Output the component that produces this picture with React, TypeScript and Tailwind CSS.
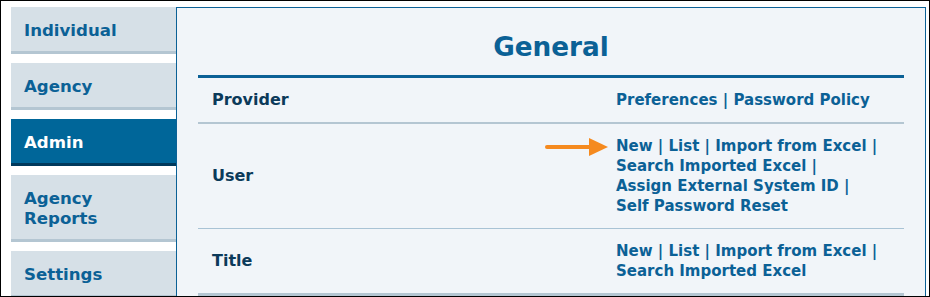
import React from "react"

const font = { fontFamily: '"DejaVu Sans", Verdana, sans-serif' }

const tabs = [
  { label: "Individual", h: "h-[47px]" },
  { label: "Agency", h: "h-[47px]" },
  { label: "Admin", h: "h-[47px]", active: true },
  { label: "Agency\nReports", h: "h-[67px]" },
  { label: "Settings", h: "h-[47px]" },
]

function Links({ items }: { items: string[][] }) {
  return (
    <div className="flex flex-col">
      {items.map((line, i) => (
        <div key={i} className="h-[20px] leading-[20px] whitespace-nowrap">
          {line.map((t, j) => (
            <span key={j}>
              <span>{t}</span>
              {j < line.length - 1 || (i < items.length - 1) ? <span> | </span> : null}
            </span>
          ))}
        </div>
      ))}
    </div>
  )
}

function Arrow() {
  return (
    <svg className="absolute left-[-71px] top-[1px]" width="64" height="20" viewBox="0 0 64 20">
      <line x1="2" y1="10" x2="46" y2="10" stroke="#f58a1f" strokeWidth="4" strokeLinecap="round" />
      <polygon points="44,1 63,10 44,19" fill="#f58a1f" />
    </svg>
  )
}

export default function App() {
  return (
    <div
      className="w-[930px] h-[297px] border border-black bg-white overflow-hidden flex pt-[6px] pl-[10px] pr-[3px] font-bold"
      style={font}
    >
      <div className="w-[165px] shrink-0 flex flex-col gap-[9px] text-[16.6px]">
        {tabs.map((t) => (
          <div
            key={t.label}
            className={
              t.active
                ? `${t.h} shrink-0 bg-[#006699] border-b-[3px] border-[#00395c] text-white flex items-center pl-[13px] pt-[3px] leading-[20px] whitespace-pre-line`
                : `${t.h} shrink-0 bg-[#d6e0e7] border-b-[3px] border-[#b4c6d2] text-[#0b6196] flex items-center pl-[13px] pt-[3px] leading-[20px] whitespace-pre-line`
            }
          >
            {t.label}
          </div>
        ))}
      </div>
      <div className="flex-1 bg-[#f1f5f9] border-l border-r border-t border-[#0b6196] px-[21px]">
        <div className="h-[67px] flex items-center justify-center text-[26.3px] text-[#0b6196] pt-[12px]">
          General
        </div>
        <div className="border-t-[3px] border-[#0b6196] text-[15px]">
          <div className="h-[46px] flex items-center border-b-2 border-[#b4c6d2]">
            <div className="w-[418px] pl-[14px] text-[#0b3a5a] text-[16px]">Provider</div>
            <div className="text-[#0b6196]">Preferences | Password Policy</div>
          </div>
          <div className="h-[105px] flex items-center border-b border-[#a9c3d5]">
            <div className="w-[418px] pl-[14px] text-[#0b3a5a] text-[16px]">User</div>
            <div className="relative text-[#0b6196]">
              <Arrow />
              <Links
                items={[
                  ["New", "List", "Import from Excel"],
                  ["Search Imported Excel"],
                  ["Assign External System ID"],
                  ["Self Password Reset"],
                ]}
              />
            </div>
          </div>
          <div className="h-[67px] flex items-center border-b-[3px] border-[#b4c6d2]">
            <div className="w-[418px] pl-[14px] text-[#0b3a5a] text-[16px]">Title</div>
            <div className="text-[#0b6196]">
              <Links items={[["New", "List", "Import from Excel"], ["Search Imported Excel"]]} />
            </div>
          </div>
        </div>
      </div>
    </div>
  )
}
